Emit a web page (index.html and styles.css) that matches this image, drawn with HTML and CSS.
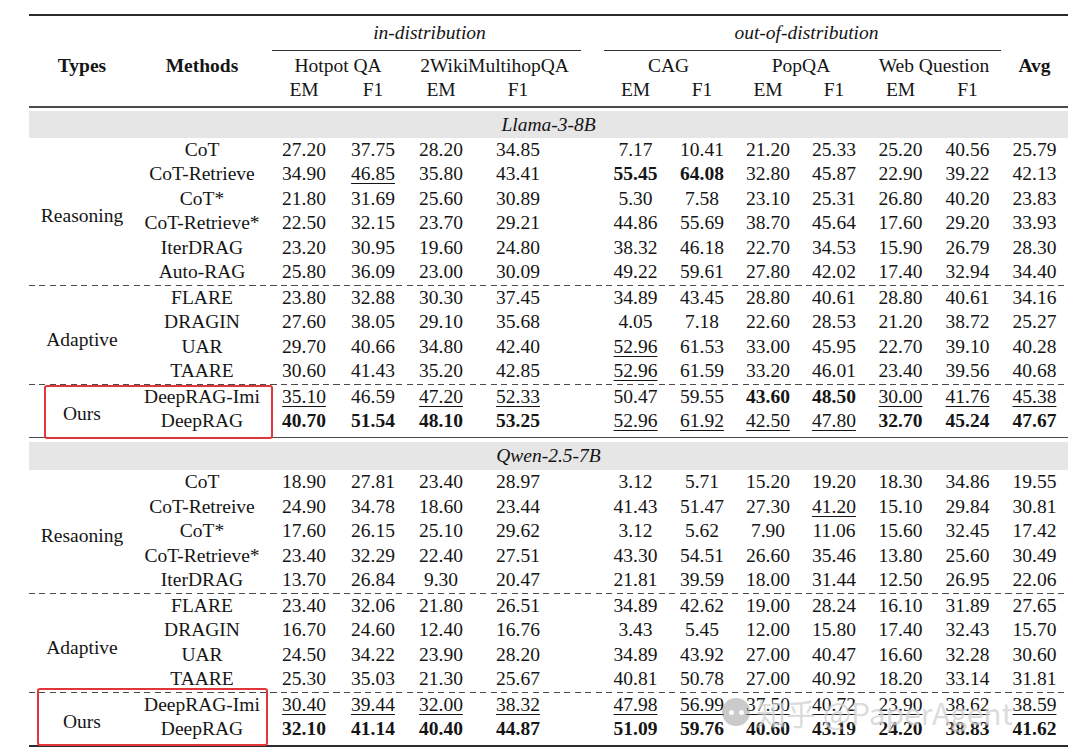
FILE: index.html
```html
<!DOCTYPE html>
<html lang="en">
<head>
<meta charset="utf-8">
<title>DeepRAG results table</title>
<link rel="stylesheet" href="styles.css">
</head>
<body>
<div class="page">
<table class="tbl">
<colgroup>
<col class="c-type"><col class="c-meth"><col class="c-n70"><col class="c-n68"><col class="c-n68"><col class="c-n86"><col class="c-sp"><col class="c-n67"><col class="c-n66"><col class="c-n66"><col class="c-n66"><col class="c-n67"><col class="c-n67"><col class="c-n67">
</colgroup>
<tbody>
<tr class="rule"><td colspan="14"><div class="rule-thick"></div></td></tr>
<tr class="h1">
<td colspan="2"></td>
<td colspan="5" class="grp"><div class="grp-in"><em>in-distribution</em></div></td>
<td colspan="6" class="grp"><div class="grp-out"><em>out-of-distribution</em></div></td>
<td></td>
</tr>
<tr class="h2">
<td rowspan="2" class="hb">Types</td>
<td rowspan="2" class="hb">Methods</td>
<td colspan="2">Hotpot QA</td>
<td colspan="3" class="h-wiki">2WikiMultihopQA</td>
<td colspan="2">CAG</td>
<td colspan="2">PopQA</td>
<td colspan="2">Web Question</td>
<td rowspan="2" class="hb">Avg</td>
</tr>
<tr class="h3">
<td>EM</td><td>F1</td><td>EM</td><td>F1</td><td></td><td>EM</td><td>F1</td><td>EM</td><td>F1</td><td>EM</td><td>F1</td>
</tr>
<tr class="rule"><td colspan="14"><div class="rule-mid"></div></td></tr>
<tr class="band"><td colspan="14"><div class="band-in"><em>Llama-3-8B</em></div></td></tr>

<tr><td rowspan="6" class="type">Reasoning</td><td>CoT</td><td>27.20</td><td>37.75</td><td>28.20</td><td>34.85</td><td></td><td>7.17</td><td>10.41</td><td>21.20</td><td>25.33</td><td>25.20</td><td>40.56</td><td>25.79</td></tr>
<tr><td>CoT-Retrieve</td><td>34.90</td><td><u>46.85</u></td><td>35.80</td><td>43.41</td><td></td><td><b>55.45</b></td><td><b>64.08</b></td><td>32.80</td><td>45.87</td><td>22.90</td><td>39.22</td><td>42.13</td></tr>
<tr><td>CoT*</td><td>21.80</td><td>31.69</td><td>25.60</td><td>30.89</td><td></td><td>5.30</td><td>7.58</td><td>23.10</td><td>25.31</td><td>26.80</td><td>40.20</td><td>23.83</td></tr>
<tr><td>CoT-Retrieve*</td><td>22.50</td><td>32.15</td><td>23.70</td><td>29.21</td><td></td><td>44.86</td><td>55.69</td><td>38.70</td><td>45.64</td><td>17.60</td><td>29.20</td><td>33.93</td></tr>
<tr><td>IterDRAG</td><td>23.20</td><td>30.95</td><td>19.60</td><td>24.80</td><td></td><td>38.32</td><td>46.18</td><td>22.70</td><td>34.53</td><td>15.90</td><td>26.79</td><td>28.30</td></tr>
<tr><td>Auto-RAG</td><td>25.80</td><td>36.09</td><td>23.00</td><td>30.09</td><td></td><td>49.22</td><td>59.61</td><td>27.80</td><td>42.02</td><td>17.40</td><td>32.94</td><td>34.40</td></tr>
<tr class="sep"><td colspan="14"><div class="dash"></div></td></tr>
<tr><td rowspan="4" class="type">Adaptive</td><td>FLARE</td><td>23.80</td><td>32.88</td><td>30.30</td><td>37.45</td><td></td><td>34.89</td><td>43.45</td><td>28.80</td><td>40.61</td><td>28.80</td><td>40.61</td><td>34.16</td></tr>
<tr><td>DRAGIN</td><td>27.60</td><td>38.05</td><td>29.10</td><td>35.68</td><td></td><td>4.05</td><td>7.18</td><td>22.60</td><td>28.53</td><td>21.20</td><td>38.72</td><td>25.27</td></tr>
<tr><td>UAR</td><td>29.70</td><td>40.66</td><td>34.80</td><td>42.40</td><td></td><td><u>52.96</u></td><td>61.53</td><td>33.00</td><td>45.95</td><td>22.70</td><td>39.10</td><td>40.28</td></tr>
<tr><td>TAARE</td><td>30.60</td><td>41.43</td><td>35.20</td><td>42.85</td><td></td><td><u>52.96</u></td><td>61.59</td><td>33.20</td><td>46.01</td><td>23.40</td><td>39.56</td><td>40.68</td></tr>
<tr class="sep"><td colspan="14"><div class="dash"></div></td></tr>
<tr><td rowspan="2" class="type">Ours</td><td>DeepRAG-Imi</td><td><u>35.10</u></td><td>46.59</td><td><u>47.20</u></td><td><u>52.33</u></td><td></td><td>50.47</td><td>59.55</td><td><b>43.60</b></td><td><b>48.50</b></td><td><u>30.00</u></td><td><u>41.76</u></td><td><u>45.38</u></td></tr>
<tr><td>DeepRAG</td><td><b>40.70</b></td><td><b>51.54</b></td><td><b>48.10</b></td><td><b>53.25</b></td><td></td><td><u>52.96</u></td><td><u>61.92</u></td><td><u>42.50</u></td><td><u>47.80</u></td><td><b>32.70</b></td><td><b>45.24</b></td><td><b>47.67</b></td></tr>
<tr class="rule"><td colspan="14"><div class="rule-mid rule-mid-lower"></div></td></tr>
<tr class="band"><td colspan="14"><div class="band-in band-in-lower"><em>Qwen-2.5-7B</em></div></td></tr>

<tr><td rowspan="5" class="type">Resaoning</td><td>CoT</td><td>18.90</td><td>27.81</td><td>23.40</td><td>28.97</td><td></td><td>3.12</td><td>5.71</td><td>15.20</td><td>19.20</td><td>18.30</td><td>34.86</td><td>19.55</td></tr>
<tr><td>CoT-Retreive</td><td>24.90</td><td>34.78</td><td>18.60</td><td>23.44</td><td></td><td>41.43</td><td>51.47</td><td>27.30</td><td><u>41.20</u></td><td>15.10</td><td>29.84</td><td>30.81</td></tr>
<tr><td>CoT*</td><td>17.60</td><td>26.15</td><td>25.10</td><td>29.62</td><td></td><td>3.12</td><td>5.62</td><td>7.90</td><td>11.06</td><td>15.60</td><td>32.45</td><td>17.42</td></tr>
<tr><td>CoT-Retrieve*</td><td>23.40</td><td>32.29</td><td>22.40</td><td>27.51</td><td></td><td>43.30</td><td>54.51</td><td>26.60</td><td>35.46</td><td>13.80</td><td>25.60</td><td>30.49</td></tr>
<tr><td>IterDRAG</td><td>13.70</td><td>26.84</td><td>9.30</td><td>20.47</td><td></td><td>21.81</td><td>39.59</td><td>18.00</td><td>31.44</td><td>12.50</td><td>26.95</td><td>22.06</td></tr>
<tr class="sep"><td colspan="14"><div class="dash"></div></td></tr>
<tr><td rowspan="4" class="type">Adaptive</td><td>FLARE</td><td>23.40</td><td>32.06</td><td>21.80</td><td>26.51</td><td></td><td>34.89</td><td>42.62</td><td>19.00</td><td>28.24</td><td>16.10</td><td>31.89</td><td>27.65</td></tr>
<tr><td>DRAGIN</td><td>16.70</td><td>24.60</td><td>12.40</td><td>16.76</td><td></td><td>3.43</td><td>5.45</td><td>12.00</td><td>15.80</td><td>17.40</td><td>32.43</td><td>15.70</td></tr>
<tr><td>UAR</td><td>24.50</td><td>34.22</td><td>23.90</td><td>28.20</td><td></td><td>34.89</td><td>43.92</td><td>27.00</td><td>40.47</td><td>16.60</td><td>32.28</td><td>30.60</td></tr>
<tr><td>TAARE</td><td>25.30</td><td>35.03</td><td>21.30</td><td>25.67</td><td></td><td>40.81</td><td>50.78</td><td>27.00</td><td>40.92</td><td>18.20</td><td>33.14</td><td>31.81</td></tr>
<tr class="sep"><td colspan="14"><div class="dash"></div></td></tr>
<tr><td rowspan="2" class="type">Ours</td><td>DeepRAG-Imi</td><td><u>30.40</u></td><td><u>39.44</u></td><td><u>32.00</u></td><td><u>38.32</u></td><td></td><td><u>47.98</u></td><td><u>56.99</u></td><td><u>37.50</u></td><td><u>40.72</u></td><td><u>23.90</u></td><td><u>38.62</u></td><td><u>38.59</u></td></tr>
<tr><td>DeepRAG</td><td><b>32.10</b></td><td><b>41.14</b></td><td><b>40.40</b></td><td><b>44.87</b></td><td></td><td><b>51.09</b></td><td><b>59.76</b></td><td><b>40.60</b></td><td><b>43.19</b></td><td><b>24.20</b></td><td><b>38.83</b></td><td><b>41.62</b></td></tr>
<tr class="rule"><td colspan="14"><div class="rule-bottom"></div></td></tr>
</tbody>
</table>

<div class="hl hl-1"></div>
<div class="hl hl-2"></div>

<div class="wm">
  <span class="wm-icon"><span class="wm-dot"></span><span class="wm-dot"></span></span>
  <span class="wm-text">知乎 @PaperAgent</span>
</div>
</div>
</body>
</html>
```

FILE: styles.css
```css
html, body {
  margin: 0;
  padding: 0;
  background: #ffffff;
}

body {
  font-family: "Liberation Serif", "Times New Roman", serif;
  color: #151515;
}

.page {
  position: relative;
  width: 1080px;
  height: 755px;
  overflow: hidden;
}

.tbl {
  margin: 14px 0 0 29px;
  border-collapse: separate;
  border-spacing: 0;
  table-layout: fixed;
  width: 1039px;
  font-size: 19.5px;
}

.c-type { width: 106px; }
.c-meth { width: 134px; }
.c-n70 { width: 70px; }
.c-n68 { width: 68px; }
.c-n86 { width: 86px; }
.c-sp { width: 41px; }
.c-n67 { width: 67px; }
.c-n66 { width: 66px; }

.tbl td {
  padding: 0;
  text-align: center;
  white-space: nowrap;
  height: 24.5px;
  line-height: 24px;
  vertical-align: middle;
}

.tbl u {
  text-decoration: underline;
  text-decoration-thickness: 1px;
  text-underline-offset: 3px;
}

.tbl b { font-weight: bold; }

/* rules */
.tbl tr.rule td,
.tbl tr.sep td {
  height: auto;
  line-height: 0;
  font-size: 0;
}

.rule-thick {
  height: 2px;
  background: #2c2c2c;
}

.rule-mid {
  height: 1.5px;
  margin-top: 2px;
  background: #4a4a4a;
}

.rule-mid-lower {
  margin-top: 3px;
}

.rule-bottom {
  height: 2px;
  margin-top: 3px;
  background: #2c2c2c;
}

.dash {
  height: 1px;
  background: repeating-linear-gradient(to right, #4a4a4a 0 6px, transparent 6px 10.5px);
}

/* header */
.tbl tr.h1 td {
  height: 35px;
  vertical-align: top;
}

.grp-in,
.grp-out {
  line-height: 34px;
  border-bottom: 1px solid #333;
}

.grp-in {
  margin: 0 21px 0 3px;
  padding-left: 6px;
}

.grp-out {
  margin: 0 0 0 2px;
  padding-left: 8px;
}

.tbl tr.h2 td {
  height: 27px;
  vertical-align: bottom;
  line-height: 24px;
}

.tbl tr.h2 td.hb {
  vertical-align: top;
  padding-top: 3px;
  font-weight: bold;
}

.tbl tr.h2 td.h-wiki {
  padding-right: 20px;
}

.tbl tr.h3 td {
  height: 26px;
  vertical-align: top;
}

/* model band */
.tbl tr.band td {
  height: auto;
  padding-top: 3px;
}

.band-in {
  height: 27px;
  line-height: 27px;
  background: #e6e6e6;
}

.band-in-lower {
  margin-top: 1px;
  height: 28px;
  line-height: 28px;
}

/* type labels */
.tbl td.type {
  padding-top: 10px;
}

/* red highlight boxes */
.hl {
  position: absolute;
  border: 2.5px solid #e2363a;
  border-radius: 3px;
  box-sizing: border-box;
}

.hl-1 {
  left: 44px;
  top: 385px;
  width: 229px;
  height: 54px;
}

.hl-2 {
  left: 37px;
  top: 688px;
  width: 231px;
  height: 58px;
}

/* watermark */
.wm {
  position: absolute;
  left: 722px;
  top: 695px;
  display: flex;
  align-items: center;
  gap: 6px;
  pointer-events: none;
}

.wm-icon {
  width: 28px;
  height: 28px;
  border-radius: 50%;
  background: rgba(150, 150, 150, 0.5);
  display: flex;
  align-items: center;
  justify-content: center;
  gap: 5px;
}

.wm-dot {
  width: 5px;
  height: 5px;
  border-radius: 50%;
  background: rgba(255, 255, 255, 0.9);
}

.wm-text {
  font-family: "Noto Sans CJK SC", "Noto Sans", sans-serif;
  font-size: 30px;
  line-height: 34px;
  color: rgba(175, 175, 175, 0.45);
  text-shadow: 0 0 2px rgba(255, 255, 255, 0.8);
}
```
